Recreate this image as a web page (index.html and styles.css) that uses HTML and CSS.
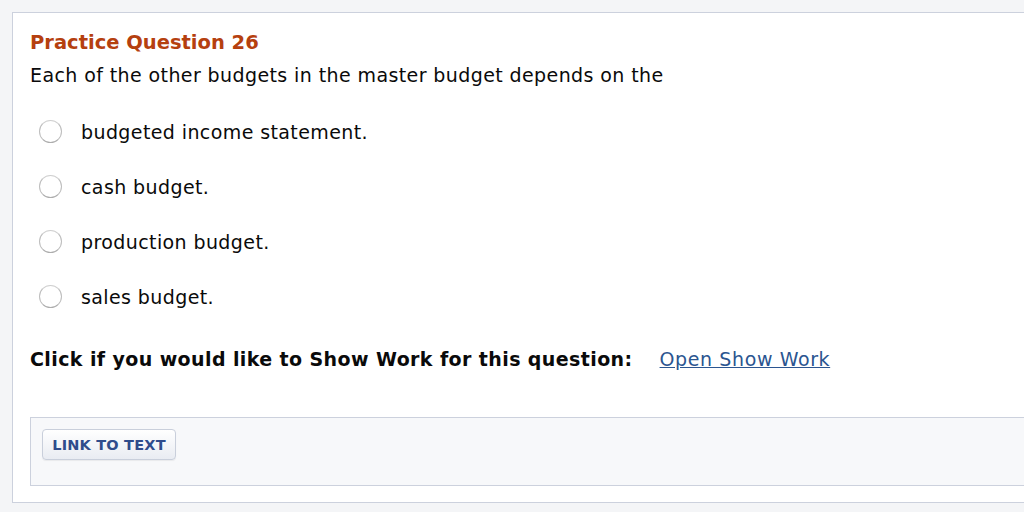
FILE: index.html
```html
<!DOCTYPE html>
<html>
<head>
<meta charset="utf-8">
<link rel="stylesheet" href="styles.css">
</head>
<body>
<div class="card">
  <h1 class="title">Practice Question 26</h1>
  <p class="question">Each of the other budgets in the master budget depends on the</p>
  <ul class="options">
    <li class="option"><span class="radio"></span><span>budgeted income statement.</span></li>
    <li class="option"><span class="radio"></span><span>cash budget.</span></li>
    <li class="option"><span class="radio"></span><span>production budget.</span></li>
    <li class="option"><span class="radio"></span><span>sales budget.</span></li>
  </ul>
  <div class="showwork">
    <span class="sw-label">Click if you would like to Show Work for this question:</span>
    <a class="sw-link" href="#">Open Show Work</a>
  </div>
  <div class="panel">
    <button class="btn">LINK TO TEXT</button>
  </div>
</div>
</body>
</html>
```

FILE: styles.css
```css
html, body {
  margin: 0;
  padding: 0;
  background: #f4f5f7;
  font-family: "DejaVu Sans", Verdana, sans-serif;
  color: #0a0a0a;
}
body {
  padding: 12px 0 0 12px;
  height: 500px;
  overflow: hidden;
}
.card {
  background: #fff;
  border: 1px solid #ccd1dd;
  border-right: none;
  height: 491px;
  box-sizing: border-box;
  padding: 18px 0 0 17px;
}
.title {
  margin: 0;
  font-size: 19.5px;
  font-weight: bold;
  color: #b5400f;
  line-height: 24px;
}
.question {
  margin: 8px 0 0;
  font-size: 19px;
  letter-spacing: 0.4px;
  line-height: 24px;
}
.options {
  list-style: none;
  margin: 17px 0 0;
  padding: 0;
}
.option {
  display: flex;
  align-items: center;
  height: 55px;
  font-size: 19px;
  letter-spacing: 0.4px;
}
.radio {
  width: 23px;
  height: 23px;
  border-radius: 50%;
  border: 1px solid #bdbdbd;
  border-bottom-color: #adadad;
  border-top-color: #cfcfcf;
  box-sizing: border-box;
  background: #fff;
  margin: 0 19px 0 9px;
}
.showwork {
  margin-top: 23px;
  display: flex;
  align-items: baseline;
  font-size: 19px;
  letter-spacing: 0.4px;
  line-height: 24px;
}
.sw-label {
  font-weight: bold;
}
.sw-link {
  margin-left: 27px;
  color: #2b5590;
  text-decoration: underline;
  letter-spacing: 0.6px;
}
.panel {
  margin-top: 46px;
  background: #f7f8fa;
  border: 1px solid #ccd1dd;
  border-right: none;
  height: 69px;
  box-sizing: border-box;
  padding: 11px 0 0 11px;
}
.btn {
  width: 134px;
  height: 31px;
  border: 1px solid #c9cfdb;
  border-radius: 4px;
  background: linear-gradient(#ffffff, #e9ecf2);
  color: #2f4c8c;
  font-family: "DejaVu Sans", Verdana, sans-serif;
  font-weight: bold;
  font-size: 14.5px;
  letter-spacing: 0.2px;
  padding: 0;
  box-shadow: 0 1px 1px rgba(0,0,0,0.06);
}
```
